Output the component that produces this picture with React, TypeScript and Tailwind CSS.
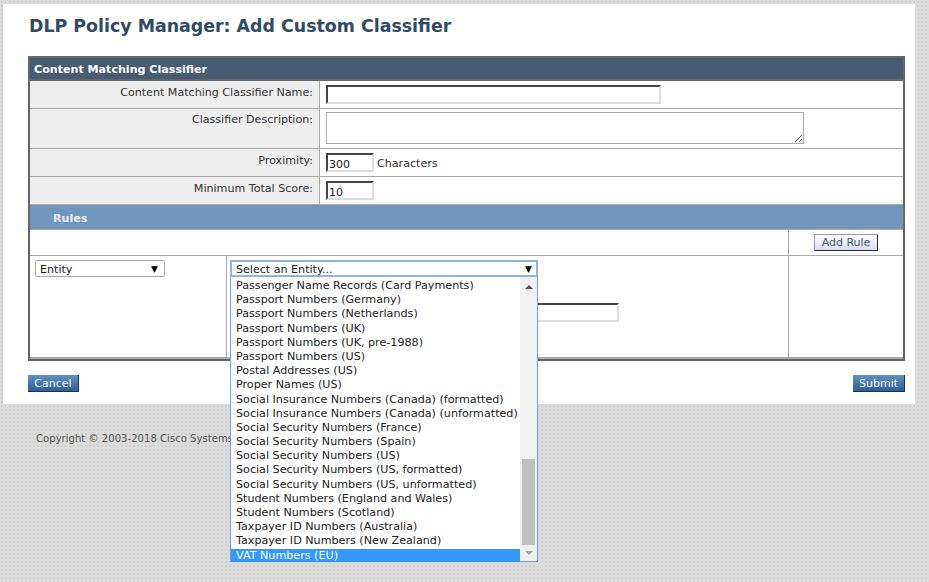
import React from "react";

const items = [
  "Passenger Name Records (Card Payments)",
  "Passport Numbers (Germany)",
  "Passport Numbers (Netherlands)",
  "Passport Numbers (UK)",
  "Passport Numbers (UK, pre-1988)",
  "Passport Numbers (US)",
  "Postal Addresses (US)",
  "Proper Names (US)",
  "Social Insurance Numbers (Canada) (formatted)",
  "Social Insurance Numbers (Canada) (unformatted)",
  "Social Security Numbers (France)",
  "Social Security Numbers (Spain)",
  "Social Security Numbers (US)",
  "Social Security Numbers (US, formatted)",
  "Social Security Numbers (US, unformatted)",
  "Student Numbers (England and Wales)",
  "Student Numbers (Scotland)",
  "Taxpayer ID Numbers (Australia)",
  "Taxpayer ID Numbers (New Zealand)",
];

const inset =
  "block h-[19px] border-2 border-t-[#444444] border-l-[#444444] border-r-[#dddddd] border-b-[#dddddd] bg-white px-px pt-[3px] text-[11px] leading-[14px] text-[#222222] outline-none";

function Row({ label, h, labelPt = "pt-[5px]", children }: { label: string; h: string; labelPt?: string; children: React.ReactNode }) {
  return (
    <div className={`flex border-b border-[#aaaaaa] ${h}`}>
      <div className={`w-[290px] shrink-0 border-r border-[#aaaaaa] bg-[#eeeeee] pr-[6px] text-right text-[#333333] ${labelPt}`}>
        {label}
      </div>
      <div className="flex-1 pl-[6px] pt-[4px]">{children}</div>
    </div>
  );
}

function BlueButton({ children, w }: { children: React.ReactNode; w: string }) {
  return (
    <button
      className={`${w} h-[17px] border-b border-r border-[#1c3350] bg-gradient-to-b from-[#5f93c8] to-[#2d5f93] pt-[2px] text-[11px] leading-[14px] text-white`}
    >
      {children}
    </button>
  );
}

export default function App() {
  return (
    <div className="relative h-[582px] w-[929px] overflow-hidden bg-[#dcdcdc] bg-[radial-gradient(#d0d0d0_1px,transparent_1px)] bg-[length:4px_4px] pt-[4px] pl-[3px] font-['DejaVu_Sans','Verdana',sans-serif] text-[11.1px] leading-[14px]">
      <div className="h-[400px] w-[912px] bg-white pl-[25px] pr-[10px]">
        <h1 className="h-[52px] pl-px pt-[11px] text-[17.4px] font-bold leading-[22px] text-[#2f4b66]">
          DLP Policy Manager: Add Custom Classifier
        </h1>

        <div className="h-[305px] w-[877px] border-2 border-[#666666]">
          <div className="h-[23px] border-b-2 border-[#666666] bg-[#475c73] pl-[4px] pt-[5px] font-bold text-white">
            Content Matching Classifier
          </div>

          <Row label="Content Matching Classifier Name:" h="h-[28px]">
            <input readOnly className={`${inset} w-[335px]`} />
          </Row>
          <Row label="Classifier Description:" h="h-[40px]" labelPt="pt-[4px]">
            <textarea readOnly className="-mt-px block h-[32px] w-[478px] border border-[#aaaaaa] bg-white outline-none" />
          </Row>
          <Row label="Proximity:" h="h-[28px]">
            <div className="flex items-center gap-[3px] text-[#333333]">
              <input readOnly value="300" className={`${inset} w-[48px]`} />
              <span className="pt-[2px]">Characters</span>
            </div>
          </Row>
          <Row label="Minimum Total Score:" h="h-[28px]">
            <input readOnly value="10" className={`${inset} w-[48px]`} />
          </Row>

          <div className="h-[25px] border-b border-[#aaaaaa] bg-[#7295bd] pl-[23px] pt-[7px] font-bold text-[#e8eef5]">
            Rules
          </div>

          <div className="flex h-[26px] border-b border-[#aaaaaa]">
            <div className="flex-1" />
            <div className="flex w-[115px] justify-center border-l border-[#aaaaaa] pt-[4px]">
              <button className="h-[17px] w-[64px] border border-[#9a94cc] border-b-[#2a2a60] border-r-[#2a2a60] bg-gradient-to-b from-white to-[#d8dcf0] pt-px text-[11px] leading-[14px] text-[#3f5a7a]">
                Add Rule
              </button>
            </div>
          </div>

          <div className="flex h-[103px] border-b-[2px] border-[#aaaaaa]">
            <div className="w-[197px] shrink-0 border-r border-[#aaaaaa] pl-[5px] pt-[4px]">
              <div className="flex h-[17px] w-[130px] items-center justify-between rounded-[2px] border border-[#aaaaaa] pl-[4px] pr-[6px] pt-[2px] text-[#222222]">
                <span>Entity</span>
                <span className="-mt-[2px] text-[9px] text-black">▼</span>
              </div>
            </div>
            <div className="relative flex-1 pt-[47px]">
              <input readOnly className={`${inset} ml-[70px] w-[322px]`} />

              <div className="absolute left-[3px] top-[4px] z-10 w-[308px]">
                <div className="flex h-[17px] items-center justify-between border-2 border-[#92b3e6] bg-white pl-[4px] pr-[4px] pt-[2px] text-[#222222]">
                  <span>Select an Entity...</span>
                  <span className="-mt-[2px] text-[9px] text-black">▼</span>
                </div>
                <div className="flex h-[285px] border border-t-0 border-[#7f9bd0] bg-white text-[11.15px]">
                  <div className="w-[289px] shrink-0 pt-[2px]">
                    {items.map((t) => (
                      <div key={t} className="h-[14.2px] whitespace-nowrap pl-[5px] leading-[14.2px] text-[#222222]">
                        {t}
                      </div>
                    ))}
                    <div className="h-[13px] whitespace-nowrap bg-[#3399ff] pl-[5px] leading-[13px] text-white">
                      VAT Numbers (EU)
                    </div>
                  </div>
                  <div className="flex w-[17px] flex-col items-center bg-[#f0f0f0] pt-[8px]">
                    <svg width="8" height="4" viewBox="0 0 8 4"><path d="M4 0 8 4H0z" fill="#505050" /></svg>
                    <div className="mt-[170px] h-[86px] w-[13px] bg-[#c0c0c0]" />
                    <svg className="mt-[6px]" width="8" height="4" viewBox="0 0 8 4"><path d="M0 0h8L4 4z" fill="#a3a3a3" /></svg>
                  </div>
                </div>
              </div>
            </div>
            <div className="w-[115px] border-l border-[#aaaaaa]" />
          </div>
        </div>

        <div className="mt-[14px] flex w-[877px] justify-between">
          <BlueButton w="w-[51px]">Cancel</BlueButton>
          <BlueButton w="w-[52px]">Submit</BlueButton>
        </div>
      </div>

      <p className="ml-[33px] mt-[28px] whitespace-nowrap text-[10.1px] leading-[14px] text-[#555555]">
        Copyright © 2003-2018 Cisco Systems
      </p>
    </div>
  );
}
